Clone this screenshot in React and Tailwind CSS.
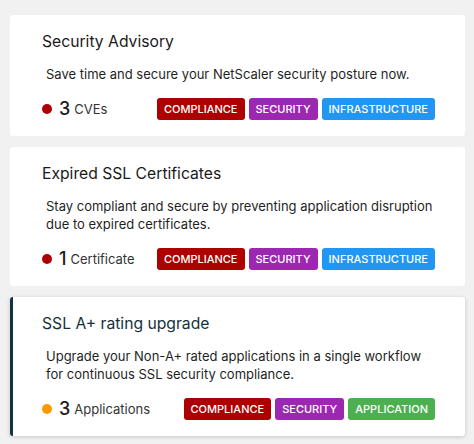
const tagStyles = {
  COMPLIANCE: 'bg-[#ad0000]',
  SECURITY: 'bg-[#9c27b0]',
  INFRASTRUCTURE: 'bg-[#2196f3]',
  APPLICATION: 'bg-[#4caf50]',
};

const cards = [
  {
    title: 'Security Advisory',
    desc: 'Save time and secure your NetScaler security posture now.',
    count: 3,
    unit: 'CVEs',
    dot: 'bg-[#ad0000]',
    tags: ['COMPLIANCE', 'SECURITY', 'INFRASTRUCTURE'],
  },
  {
    title: 'Expired SSL Certificates',
    desc: 'Stay compliant and secure by preventing application disruption due to expired certificates.',
    count: 1,
    unit: 'Certificate',
    dot: 'bg-[#ad0000]',
    tags: ['COMPLIANCE', 'SECURITY', 'INFRASTRUCTURE'],
  },
  {
    title: 'SSL A+ rating upgrade',
    desc: 'Upgrade your Non-A+ rated applications in a single workflow for continuous SSL security compliance.',
    count: 3,
    unit: 'Applications',
    dot: 'bg-[#ff9800]',
    tags: ['COMPLIANCE', 'SECURITY', 'APPLICATION'],
    selected: true,
  },
];

function Card({ card }) {
  return (
    <div
      className={
        'w-[455px] rounded-[3px] bg-white pt-[15px] pb-[16px] pr-[22px] ' +
        (card.selected
          ? 'border-l-[3px] border-[#0f3541] pl-[29px] shadow-[0_1px_4px_rgba(0,0,0,0.18)]'
          : 'pl-[32px]')
      }
    >
      <h3
        className={
          'text-[15.7px] leading-[24px] ' + (card.selected ? 'text-[#15313b]' : 'text-[#1a1a1a]')
        }
      >
        {card.title}
      </h3>
      <p className="mt-[11px] pl-[4px] pr-[6px] text-[13px] leading-[18px] text-[#1f1f1f]">
        {card.desc}
      </p>
      <div className="mt-[15px] flex items-center justify-between pr-[8px]">
        <div className="flex items-center">
          <span className={'h-[10px] w-[10px] rounded-full ' + card.dot}></span>
          <span className="ml-[7px] text-[18px] font-medium leading-none text-[#1a1a1a]">
            {card.count}
          </span>
          <span className="ml-[4px] text-[13px] leading-none text-[#333]">{card.unit}</span>
        </div>
        <div className="flex gap-[4px]">
          {card.tags.map((t) => (
            <span
              key={t}
              className={
                'flex h-[22px] items-center rounded-[3px] px-[7px] text-[11px] font-medium text-white ' +
                tagStyles[t]
              }
            >
              {t}
            </span>
          ))}
        </div>
      </div>
    </div>
  );
}

export default function App() {
  return (
    <div
      className="flex min-h-[444px] flex-col gap-[11px] bg-[#f1f1f1] pl-[10px] pt-[15px]"
      style={{ fontFamily: 'Inter, "Noto Sans", sans-serif' }}
    >
      {cards.map((c) => (
        <Card key={c.title} card={c} />
      ))}
    </div>
  );
}
